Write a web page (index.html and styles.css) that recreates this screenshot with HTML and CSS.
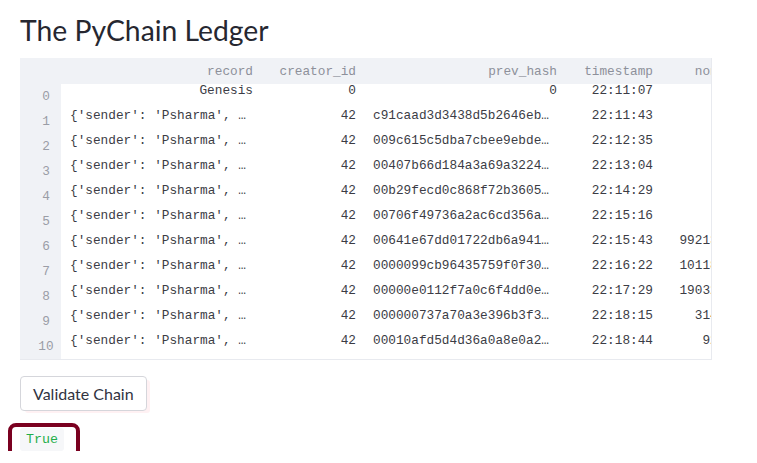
FILE: index.html
```html
<!DOCTYPE html>
<html>
<head>
<meta charset="utf-8">
<link rel="stylesheet" href="styles.css">
</head>
<body>
<main class="page">
  <h1 class="title">The PyChain Ledger</h1>
  <div class="frame">
    <table class="grid">
      <colgroup>
        <col class="c-idx"><col class="c-rec"><col class="c-cre"><col class="c-hash"><col class="c-ts"><col class="c-nonce">
      </colgroup>
      <thead>
        <tr><th></th><th>record</th><th>creator_id</th><th>prev_hash</th><th>timestamp</th><th>nonce</th></tr>
      </thead>
      <tbody>
        <tr><td class="idx">0</td><td>Genesis</td><td>0</td><td>0</td><td>22:11:07</td><td>0</td></tr>
        <tr><td class="idx">1</td><td class="l">{'sender': 'Psharma', …</td><td>42</td><td class="l">c91caad3d3438d5b2646eb…</td><td>22:11:43</td><td>12</td></tr>
        <tr><td class="idx">2</td><td class="l">{'sender': 'Psharma', …</td><td>42</td><td class="l">009c615c5dba7cbee9ebde…</td><td>22:12:35</td><td>58</td></tr>
        <tr><td class="idx">3</td><td class="l">{'sender': 'Psharma', …</td><td>42</td><td class="l">00407b66d184a3a69a3224…</td><td>22:13:04</td><td>31</td></tr>
        <tr><td class="idx">4</td><td class="l">{'sender': 'Psharma', …</td><td>42</td><td class="l">00b29fecd0c868f72b3605…</td><td>22:14:29</td><td>77</td></tr>
        <tr><td class="idx">5</td><td class="l">{'sender': 'Psharma', …</td><td>42</td><td class="l">00706f49736a2ac6cd356a…</td><td>22:15:16</td><td>46</td></tr>
        <tr><td class="idx">6</td><td class="l">{'sender': 'Psharma', …</td><td>42</td><td class="l">00641e67dd01722db6a941…</td><td>22:15:43</td><td>9921374</td></tr>
        <tr><td class="idx">7</td><td class="l">{'sender': 'Psharma', …</td><td>42</td><td class="l">0000099cb96435759f0f30…</td><td>22:16:22</td><td>1011842</td></tr>
        <tr><td class="idx">8</td><td class="l">{'sender': 'Psharma', …</td><td>42</td><td class="l">00000e0112f7a0c6f4dd0e…</td><td>22:17:29</td><td>1903265</td></tr>
        <tr><td class="idx">9</td><td class="l">{'sender': 'Psharma', …</td><td>42</td><td class="l">000000737a70a3e396b3f3…</td><td>22:18:15</td><td>31468</td></tr>
        <tr><td class="idx">10</td><td class="l">{'sender': 'Psharma', …</td><td>42</td><td class="l">00010afd5d4d36a0a8e0a2…</td><td>22:18:44</td><td>9275</td></tr>
      </tbody>
    </table>
  </div>
  <div class="actions">
    <button class="btn" type="button">Validate Chain</button>
  </div>
  <div class="result">
    <code class="code">True</code>
    <span class="mark"></span>
  </div>
</main>
</body>
</html>
```
FILE: styles.css
```css
html, body {
  margin: 0;
  padding: 0;
  background: #ffffff;
}
body {
  font-family: "Lato", "Open Sans", sans-serif;
  color: #31333f;
}
.page {
  padding: 0 20px;
  display: flex;
  flex-direction: column;
  align-items: flex-start;
}
.title {
  margin: 0;
  padding-top: 13px;
  height: 58px;
  box-sizing: border-box;
  font-size: 28.3px;
  font-weight: 400;
  line-height: 34px;
  color: #262730;
}
.frame {
  width: 691px;
  height: 301px;
  overflow: hidden;
  border-right: 1px solid #e8eaef;
  border-bottom: 1px solid #e8eaef;
  background: #ffffff;
}
.grid {
  table-layout: fixed;
  border-collapse: collapse;
  border-spacing: 0;
  width: 721px;
  font-family: "Liberation Mono", monospace;
  font-size: 12.75px;
}
.c-idx { width: 41px; }
.c-rec { width: 200px; }
.c-cre { width: 103px; }
.c-hash { width: 201px; }
.c-ts { width: 96px; }
.c-nonce { width: 80px; }
.grid th {
  height: 26px;
  padding: 0 8px;
  background: #f0f2f6;
  color: #8d909a;
  font-weight: 400;
  text-align: right;
  vertical-align: middle;
  white-space: nowrap;
  overflow: hidden;
}
.grid td {
  height: 25px;
  padding: 0 8px;
  line-height: 13px;
  vertical-align: top;
  text-align: right;
  white-space: nowrap;
  overflow: hidden;
  color: #3b3c45;
}
.grid td.l {
  text-align: left;
  padding-left: 9px;
}
.grid td.idx {
  background: #f0f2f6;
  color: #9a9da6;
  text-align: center;
  padding: 0 0 0 11px;
  vertical-align: middle;
  line-height: 25px;
}
.actions {
  display: flex;
  padding-top: 16px;
}
.btn {
  height: 35px;
  padding: 0 12px;
  border: 1px solid #d5d6db;
  border-radius: 4px;
  background: #ffffff;
  color: #31333f;
  font-family: "Lato", "Open Sans", sans-serif;
  font-size: 16px;
  box-shadow: 4px 3px 0 -1px rgba(255, 60, 80, 0.07);
}
.result {
  position: relative;
  margin-top: 17px;
}
.code {
  display: block;
  padding: 2px 6px;
  height: 19px;
  line-height: 19px;
  background: #f6f7f9;
  border-radius: 3px;
  color: #1fae4a;
  font-family: "Liberation Mono", monospace;
  font-size: 13.3px;
}
.mark {
  position: absolute;
  left: -12px;
  top: -5px;
  width: 64px;
  height: 27px;
  border: 4px solid #7a0020;
  border-radius: 8px;
}
```
